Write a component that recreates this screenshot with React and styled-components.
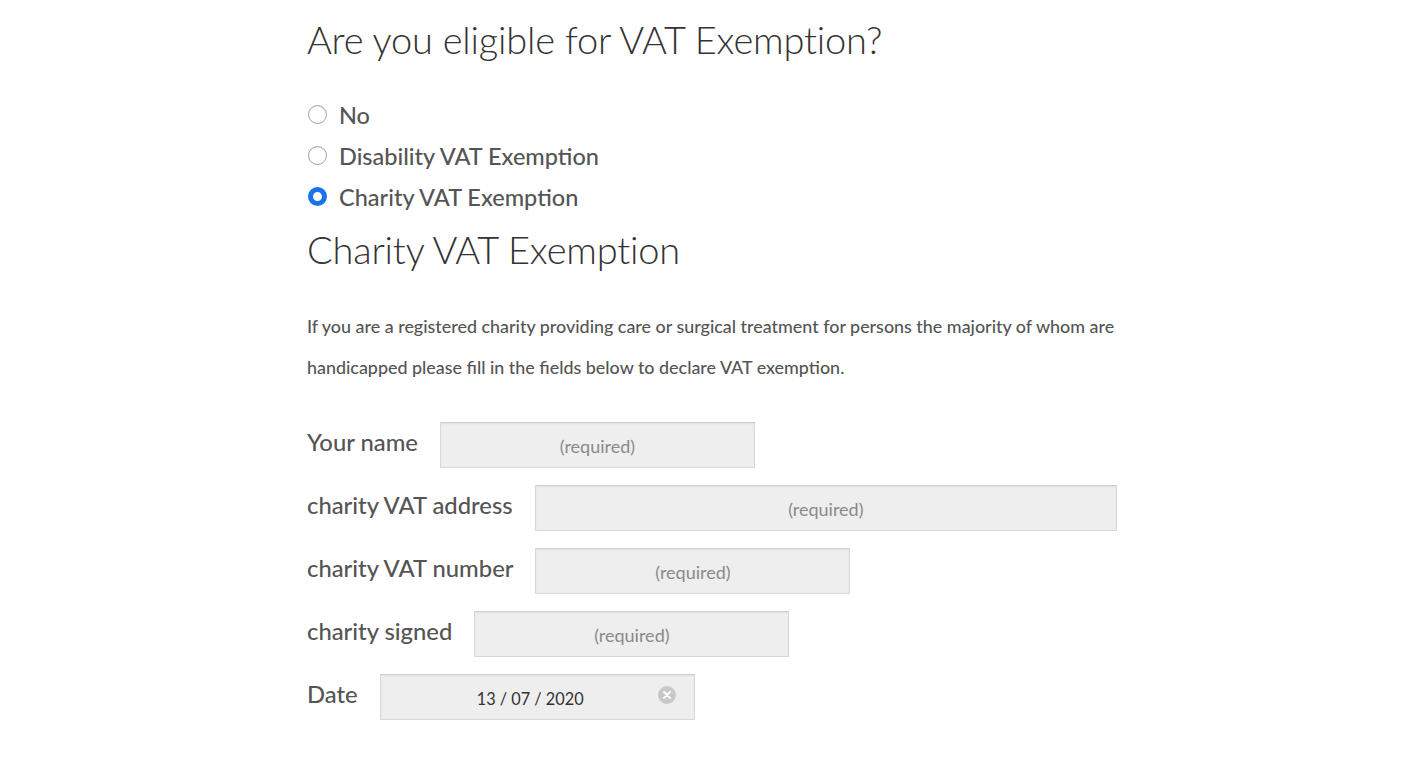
import React, { useState } from 'react';
import styled, { createGlobalStyle } from 'styled-components';

const GlobalStyle = createGlobalStyle`
  body {
    margin: 0;
    background: #fff;
    font-family: Lato, "Open Sans", sans-serif;
    color: #555;
  }
`;

const Page = styled.div`
  padding: 13px 0 40px 307px;
  width: 810px;
`;

const Title = styled.h2`
  margin: ${(p) => (p.second ? '6px 0 0' : '0')};
  font-size: 38px;
  font-weight: 300;
  color: #333;
  line-height: 52px;
  letter-spacing: -0.2px;
`;

const Options = styled.div`
  display: flex;
  flex-direction: column;
  margin: 29px 0 0;
`;

const Option = styled.label`
  display: flex;
  align-items: center;
  height: 41px;
  font-size: 23.5px;
  font-weight: 500;
  color: #555;
  cursor: pointer;
`;

const Radio = styled.span`
  width: 19px;
  height: 19px;
  border-radius: 50%;
  box-sizing: border-box;
  margin: 0 12px 0 1px;
  border: ${(p) => (p.checked ? '5px solid #1a73e8' : '1px solid #a4a4a4')};
  background: #fff;
  box-shadow: ${(p) => (p.checked ? 'none' : 'inset 0 1px 1px rgba(0,0,0,0.08)')};
`;

const Intro = styled.p`
  margin: 31px 0 0;
  font-size: 17.9px;
  font-weight: 500;
  line-height: 41px;
  color: #555;
`;

const Fields = styled.div`
  display: flex;
  flex-direction: column;
  gap: 17px;
  margin-top: 34px;
`;

const Row = styled.div`
  display: flex;
  align-items: center;
  gap: 22px;
`;

const Label = styled.span`
  font-size: 23.8px;
  font-weight: 500;
  color: #555;
  white-space: nowrap;
  margin-top: -6px;
`;

const Box = styled.div`
  position: relative;
  width: ${(p) => (p.wide ? 'auto' : '315px')};
  flex: ${(p) => (p.wide ? '1' : 'none')};
  height: 46px;
  box-sizing: border-box;
  background: #eeeeee;
  border: 1px solid #d8d8d8;
  border-top-color: #cfcfcf;
  box-shadow: inset 0 1px 2px rgba(0, 0, 0, 0.06);
`;

const Input = styled.input`
  width: 100%;
  height: 100%;
  box-sizing: border-box;
  border: none;
  background: transparent;
  text-align: center;
  font-family: Lato, sans-serif;
  font-size: 16.3px;
  color: #333;
  padding: 2px ${(p) => (p.clearable ? '24px' : '10px')} 0 10px;
  outline: none;

  &::placeholder {
    color: #8a8a8a;
    font-size: 18px;
  }
`;

const Clear = styled.span`
  position: absolute;
  right: 18px;
  top: 11px;
  width: 18px;
  height: 18px;
  display: flex;
  align-items: center;
  justify-content: center;
`;

const options = ['No', 'Disability VAT Exemption', 'Charity VAT Exemption'];

const fields = [
  { label: 'Your name' },
  { label: 'charity VAT address', wide: true },
  { label: 'charity VAT number' },
  { label: 'charity signed' },
];

export default function App() {
  const [choice, setChoice] = useState(2);

  return (
    <>
      <GlobalStyle />
      <Page>
        <Title>Are you eligible for VAT Exemption?</Title>
        <Options>
          {options.map((o, i) => (
            <Option key={o} onClick={() => setChoice(i)}>
              <Radio checked={choice === i} />
              {o}
            </Option>
          ))}
        </Options>
        <Title second>Charity VAT Exemption</Title>
        <Intro>
          If you are a registered charity providing care or surgical treatment for persons the majority of whom are
          handicapped please fill in the fields below to declare VAT exemption.
        </Intro>
        <Fields>
          {fields.map((f) => (
            <Row key={f.label}>
              <Label>{f.label}</Label>
              <Box wide={f.wide}>
                <Input placeholder="(required)" />
              </Box>
            </Row>
          ))}
          <Row>
            <Label>Date</Label>
            <Box>
              <Input clearable defaultValue="13 / 07 / 2020" />
              <Clear>
                <svg width="18" height="18" viewBox="0 0 18 18">
                  <circle cx="9" cy="9" r="9" fill="#c8c8c8" />
                  <path d="M6 6l6 6M12 6l-6 6" stroke="#fff" strokeWidth="2" strokeLinecap="round" />
                </svg>
              </Clear>
            </Box>
          </Row>
        </Fields>
      </Page>
    </>
  );
}
